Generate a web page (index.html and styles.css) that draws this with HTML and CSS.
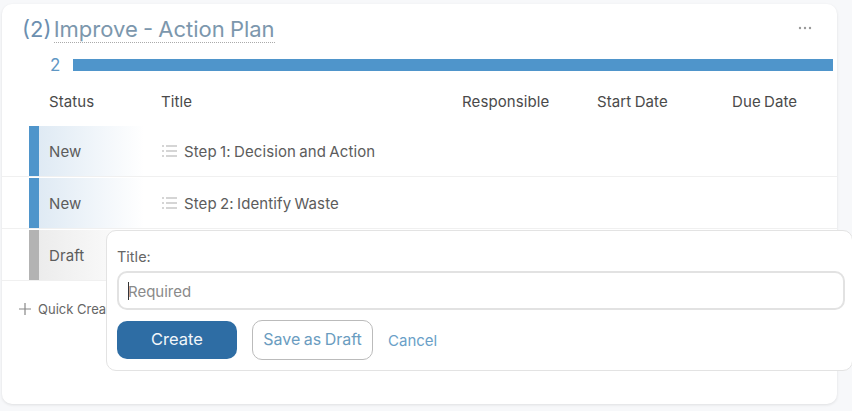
FILE: index.html
```html
<!DOCTYPE html>
<html>
<head>
    <meta charset="UTF-8">
    <title>Improve - Action Plan</title>
    <link rel="stylesheet" href="styles.css">
</head>
<body>
    <div class="card">
        <div class="card-head">
            <h2 class="card-title">(2) <span class="title-link">Improve - Action Plan</span></h2>
            <span class="more">
                <svg width="14" height="4" viewBox="0 0 14 4"><circle cx="2" cy="2" r="1.2"/><circle cx="7" cy="2" r="1.2"/><circle cx="12" cy="2" r="1.2"/></svg>
            </span>
        </div>

        <div class="progress">
            <span class="progress-count">2</span>
            <div class="progress-bar"></div>
        </div>

        <div class="row head-row">
            <div class="cell">Status</div>
            <div class="cell">Title</div>
            <div class="cell">Responsible</div>
            <div class="cell">Start Date</div>
            <div class="cell">Due Date</div>
        </div>

        <div class="row item-row">
            <div class="cell status status-new">New</div>
            <div class="cell item-title">
                <svg class="list-icon" width="16" height="14" viewBox="0 0 16 14"><path d="M0 2h2M0 7h2M0 12h2M4 2h11M4 7h11M4 12h11"/></svg>
                Step 1: Decision and Action
            </div>
        </div>
        <div class="row item-row">
            <div class="cell status status-new">New</div>
            <div class="cell item-title">
                <svg class="list-icon" width="16" height="14" viewBox="0 0 16 14"><path d="M0 2h2M0 7h2M0 12h2M4 2h11M4 7h11M4 12h11"/></svg>
                Step 2: Identify Waste
            </div>
        </div>
        <div class="row item-row">
            <div class="cell status status-draft">Draft</div>
        </div>

        <div class="quick-create">
            <svg width="12" height="12" viewBox="0 0 12 12"><path d="M6 0v12M0 6h12"/></svg>
            Quick Create
        </div>

        <div class="create-popup">
            <label class="field-label">Title:</label>
            <div class="field-input"><span class="caret"></span><span class="placeholder">Required</span></div>
            <div class="actions">
                <button class="btn btn-primary">Create</button>
                <button class="btn btn-outline">Save as Draft</button>
                <a class="cancel">Cancel</a>
            </div>
        </div>
    </div>
</body>
</html>
```

FILE: styles.css
```css
body {
    margin: 0;
    padding: 4px 15px 7px 2px;
    background: #f7f8fa;
    font-family: Inter, "Open Sans", sans-serif;
    color: #444;
    overflow: hidden;
}

.card {
    position: relative;
    height: 400px;
    background: #fff;
    border-radius: 10px;
    box-shadow: 0 1px 3px rgba(0,0,0,0.1);
}

.card-head {
    display: flex;
    justify-content: space-between;
    padding: 11px 25px 0 20px;
}

.card-title {
    margin: 0;
    font-size: 22px;
    font-weight: 400;
    line-height: 28px;
    word-spacing: -1px;
    color: #6c8fb0;
}

.title-link {
    margin-left: -3px;
    color: #7c97ad;
    border-bottom: 1px dotted #aaa;
}

.more {
    padding-top: 11px;
}

.more svg {
    display: block;
    fill: #999;
}

.progress {
    display: flex;
    align-items: center;
    gap: 15px;
    padding: 16px 4px 0 48px;
    height: 12px;
}

.progress-count {
    font-size: 17px;
    color: #5f97c4;
    width: 8px;
}

.progress-bar {
    flex: 1;
    height: 12px;
    background: #4f95cb;
}

.row {
    display: grid;
    grid-template-columns: 132px 301px 135px 135px 1fr;
    padding-left: 27px;
}

.cell {
    font-size: 15px;
    letter-spacing: 0.1px;
    word-spacing: -1px;
    padding-left: 20px;
}

.cell + .cell {
    padding-left: 0;
}

.head-row {
    height: 50px;
    align-items: center;
    margin-top: 5px;
    color: #4a4a4a;
}

.item-row {
    height: 50px;
    align-items: stretch;
    border-bottom: 1px solid #f0f0f0;
    margin-bottom: 1px;
    color: #5c5c5c;
}

.status {
    display: flex;
    align-items: center;
    padding-left: 10px;
    border-left: 10px solid;
}

.status-new {
    border-left-color: #4f95cb;
    background: linear-gradient(to right, #dfeaf4, #fff 105px);
}

.status-draft {
    border-left-color: #b3b3b3;
    background: linear-gradient(to right, #ececec, #fff 105px);
}

.item-title {
    display: flex;
    align-items: center;
    gap: 6px;
    grid-column: 2 / 4;
}

.list-icon {
    margin-left: 1px;
}

.list-icon path {
    fill: none;
    stroke: #c8c8c8;
    stroke-width: 1.4;
}

.quick-create {
    display: flex;
    align-items: center;
    gap: 7px;
    padding: 19px 0 0 17px;
    font-size: 13px;
    color: #666;
}

.quick-create svg path {
    fill: none;
    stroke: #888;
    stroke-width: 1.2;
}

.create-popup {
    position: absolute;
    left: 104px;
    top: 226px;
    width: 747px;
    height: 141px;
    box-sizing: border-box;
    padding: 17px 7px 0 10px;
    background: #fff;
    border: 1px solid #e3e3e3;
    border-radius: 10px;
}

.field-label {
    display: block;
    font-size: 14.5px;
    line-height: 18px;
    color: #666;
}

.field-input {
    display: flex;
    align-items: center;
    height: 39px;
    box-sizing: border-box;
    margin-top: 5px;
    padding-left: 9px;
    border: 2px solid #e2e2e2;
    border-radius: 10px;
    font-size: 15px;
    color: #8a8a8a;
}

.placeholder {
    padding-top: 1px;
}

.caret {
    width: 1px;
    height: 18px;
    margin-right: -1px;
    background: #333;
}

.actions {
    display: flex;
    align-items: center;
    gap: 15px;
    margin-top: 10px;
}

.btn {
    height: 38px;
    border-radius: 10px;
    font-family: inherit;
    font-size: 16px;
    padding: 0 0 2px;
}

.btn-primary {
    width: 120px;
    border: none;
    background: #2e6da4;
    color: #f2f6fa;
    font-size: 16.5px;
}

.btn-outline {
    width: 121px;
    height: 40px;
    border: 1px solid #bbb;
    background: #fff;
    color: #6a9cc0;
    word-spacing: -1px;
}

.cancel {
    font-size: 15px;
    color: #6a9fc8;
    padding-top: 1px;
}
```
